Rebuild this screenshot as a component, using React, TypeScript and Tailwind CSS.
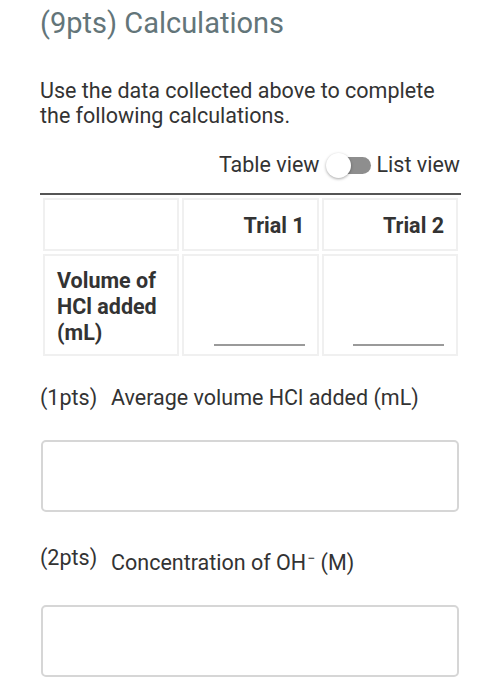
import React from "react";

const font = { fontFamily: "Roboto, 'Liberation Sans', sans-serif" };

function Toggle() {
  return (
    <div className="relative w-[45px] h-[25px]">
      <div className="absolute left-[10px] right-0 top-[4px] h-[17px] rounded-full bg-[#8e8e8e]" />
      <div className="absolute left-0 top-0 w-[25px] h-[25px] rounded-full bg-white shadow-[0_1px_3px_rgba(0,0,0,0.35)]" />
    </div>
  );
}

function Question({ pts, gap, children }: { pts: string; gap: string; children: React.ReactNode }) {
  return (
    <div>
      <div className="flex items-baseline text-[21.5px] leading-[26px] text-[#333]">
        <span className="w-[71px]">{pts}</span>
        <span>{children}</span>
      </div>
      <div className={`${gap} ml-[1px] h-[72px] w-[418px] rounded-[5px] border-2 border-[#d6d6d6] bg-white`} />
    </div>
  );
}

export default function App() {
  return (
    <div className="w-[503px] h-[700px] bg-white overflow-hidden" style={font}>
      <div className="pl-[40px] w-[461px]">
        <h1 className="pt-[5px] text-[29px] leading-[36px] text-[#637579]">(9pts) Calculations</h1>
        <p className="mt-[37px] text-[21.5px] leading-[25px] text-[#333]">
          Use the data collected above to complete the following calculations.
        </p>

        <div className="mt-[24px] flex items-center justify-end gap-[6px] text-[21.5px] leading-[26px] text-[#333]">
          <span>Table view</span>
          <Toggle />
          <span className="mr-[1px]">List view</span>
        </div>

        <div className="mt-[15px] border-t-2 border-[#555]" />

        <table className="w-full border-separate border-spacing-[3px] text-[21.5px] text-[#333]">
          <tbody>
            <tr className="h-[53px]">
              <td className="w-[136px] border-2 border-[#f0f0f0]" />
              <td className="w-[136px] border-2 border-[#f0f0f0] pr-[12px] pt-[3px] text-right font-bold">Trial 1</td>
              <td className="w-[136px] border-2 border-[#f0f0f0] pr-[12px] pt-[3px] text-right font-bold">Trial 2</td>
            </tr>
            <tr className="h-[99px]">
              <td className="border-2 border-[#f0f0f0] pl-[12px] pt-[12px] pb-[8px] align-middle font-bold leading-[26px]">
                Volume of
                <br />
                HCl added
                <br />
                (mL)
              </td>
              <td className="border-2 border-[#f0f0f0] pr-[12px] pb-[8px] align-bottom">
                <div className="ml-auto w-[91px] border-b-2 border-[#9a9a9a]" />
              </td>
              <td className="border-2 border-[#f0f0f0] pr-[12px] pb-[8px] align-bottom">
                <div className="ml-auto w-[91px] border-b-2 border-[#9a9a9a]" />
              </td>
            </tr>
          </tbody>
        </table>

        <div className="mt-[26px]">
          <Question pts="(1pts)" gap="mt-[29px]">
            Average volume HCl added (mL)
          </Question>
        </div>
        <div className="mt-[33px]">
          <Question pts="(2pts)" gap="mt-[34px]">
            <span className="relative top-[5px]">
              Concentration of OH<sup className="text-[14px] ml-[1px]">−</sup> (M)
            </span>
          </Question>
        </div>
      </div>
    </div>
  );
}
